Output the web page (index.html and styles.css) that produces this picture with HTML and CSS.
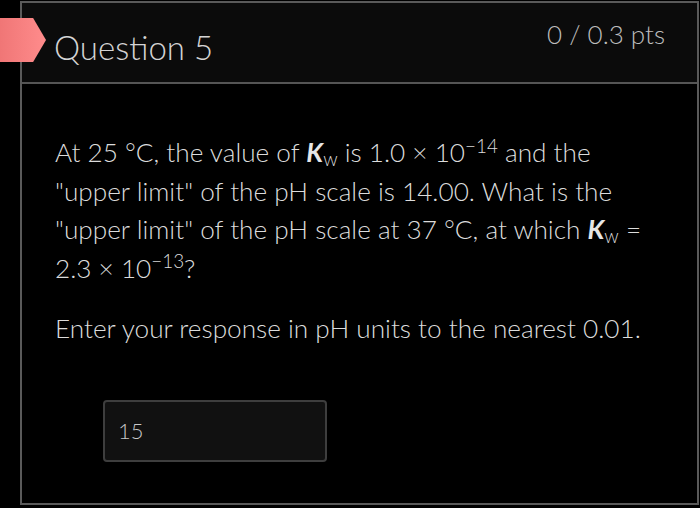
FILE: index.html
```html
<!DOCTYPE html>
<html>
<head>
<meta charset="utf-8">
<link rel="stylesheet" href="styles.css">
</head>
<body>
<div class="marker"></div>
<div class="card">
  <div class="header">
    <h2 class="title">Question 5</h2>
    <div class="pts">0 / 0.3 pts</div>
  </div>
  <div class="content">
    <p class="text">At 25 °C, the value of <b class="k">K</b><sub>w</sub> is 1.0 × 10<sup>−14</sup> and the "upper limit" of the pH scale is 14.00. What is the "upper limit" of the pH scale at 37 °C, at which <b class="k">K</b><sub>w</sub> = 2.3 × 10<sup>−13</sup>?</p>
    <p class="text">Enter your response in pH units to the nearest 0.01.</p>
    <div class="answer">15</div>
  </div>
</div>
</body>
</html>
```

FILE: styles.css
```css
html, body {
  margin: 0;
  padding: 0;
  background: #000;
}
body {
  font-family: "Lato Light", Lato, "Open Sans", sans-serif;
  font-weight: 300;
  width: 700px;
  height: 508px;
  overflow: hidden;
  position: relative;
}
.marker {
  position: absolute;
  left: 0;
  top: 18px;
  width: 46px;
  height: 44px;
  background: linear-gradient(90deg, #f07676, #ff8c8c);
  clip-path: polygon(0 0, 72% 0, 100% 50%, 72% 100%, 0 100%);
}
.card {
  margin: 1px 1px 0 20px;
  height: 504px;
  border: 2px solid #5a5a5a;
  box-sizing: border-box;
  display: flex;
  flex-direction: column;
}
.header {
  height: 81px;
  box-sizing: border-box;
  background: #0b0b0b;
  border-bottom: 2px solid #555;
  display: flex;
  justify-content: space-between;
  align-items: flex-start;
  padding: 0 32px 0 32px;
}
.title {
  margin: 25px 0 0;
  font-weight: 300;
  font-size: 33px;
  line-height: 38px;
  color: #d4d4d4;
}
.pts {
  margin-top: 15px;
  font-size: 26px;
  line-height: 32px;
  color: #bdbdbd;
  font-weight: 300;
}
.content {
  padding: 49px 40px 0 33px;
}
.text {
  margin: 0 0 22px;
  font-weight: 300;
  font-size: 26.2px;
  line-height: 38.5px;
  color: #dcdcdc;
}
.k {
  font-family: Lato, sans-serif;
  font-weight: 700;
  font-style: italic;
  color: #e6e6e6;
}
sub, sup {
  font-size: 0.72em;
  line-height: 0;
  position: relative;
}
sub { vertical-align: baseline; top: 0.22em; }
sup { vertical-align: baseline; top: -0.5em; }
.answer {
  margin: 52px 0 0 48px;
  width: 224px;
  height: 62px;
  box-sizing: border-box;
  border: 2px solid #3e3e3e;
  border-radius: 4px;
  background: #111;
  padding-left: 13px;
  font-size: 22px;
  line-height: 58px;
  color: #c8c8c8;
  font-weight: 300;
}
```
